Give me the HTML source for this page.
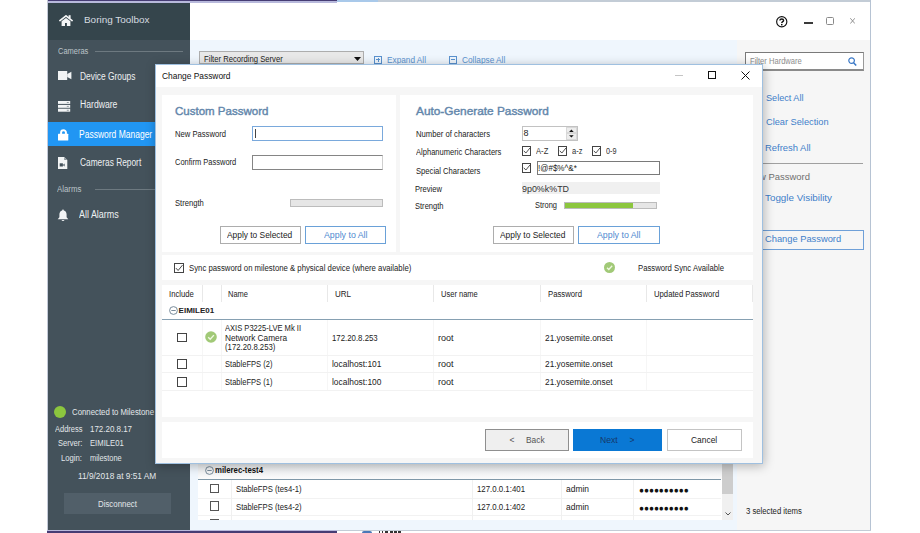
<!DOCTYPE html>
<html><head><meta charset="utf-8"><style>
html,body{margin:0;padding:0;}
body{width:920px;height:533px;overflow:hidden;position:relative;background:#fff;font-family:"Liberation Sans",sans-serif;}
div,span,svg{position:absolute;}
.t{white-space:nowrap;transform-origin:0 50%;}
</style></head><body>
<div style="left:47px;top:0px;width:290px;height:1px;background:#463c74"></div>
<div style="left:47px;top:1px;width:290px;height:2px;background:#b8b9dc"></div>
<div style="left:337px;top:0px;width:41px;height:2px;background:#a9c9ea"></div>
<div style="left:378px;top:0px;width:493px;height:2px;background:#c3ccd6"></div>
<div style="left:47px;top:0px;width:1px;height:533px;background:#c4cad8"></div>
<div style="left:870px;top:0px;width:1px;height:531px;background:#b6c3d3"></div>
<div style="left:47px;top:530px;width:290px;height:1px;background:#b8b9dc"></div>
<div style="left:47px;top:531px;width:290px;height:2px;background:#463c74"></div>
<div style="left:337px;top:530px;width:534px;height:1px;background:#c3ccd6"></div>
<div style="left:362px;top:531.3px;width:9.6px;height:1.7px;background:#4a78b8;border-radius:2px 2px 0 0"></div>
<div style="left:378.5px;top:531.4px;width:1.2px;height:1.6px;background:#333"></div>
<div style="left:381.5px;top:531.4px;width:1.2px;height:1.6px;background:#333"></div>
<div style="left:385px;top:531.4px;width:3.2px;height:1.6px;background:#333"></div>
<div style="left:389.5px;top:531.4px;width:3.2px;height:1.6px;background:#333"></div>
<div style="left:393.5px;top:531.4px;width:3.2px;height:1.6px;background:#333"></div>
<div style="left:397.5px;top:531.4px;width:3.2px;height:1.6px;background:#333"></div>
<div style="left:48px;top:3px;width:142px;height:37px;background:#35454c"></div>
<div style="left:48px;top:40px;width:142px;height:490px;background:#44525b"></div>
<div style="left:48px;top:122px;width:142px;height:24px;background:#2196f3"></div>
<svg style="position:absolute;left:58.5px;top:15px" width="14" height="11" viewBox="0 0 14 11"><path d="M0.9 5.6 L7 0.9 L13.1 5.6" stroke="#f4f5f6" stroke-width="1.7" fill="none" stroke-linecap="round"/><rect x="9.6" y="0.2" width="2" height="3.2" fill="#f4f5f6"/><path d="M2.6 6.3 L7 2.9 L11.4 6.3 V11 H7.9 V8 H6 V11 H2.6Z" fill="#f4f5f6"/></svg>
<span class="t" style="left:84px;top:16.29px;font-size:9px;line-height:9px;color:#d5dce0;transform:scaleX(1.1032);">Boring Toolbox</span>
<span class="t" style="left:57.7px;top:47.44px;font-size:8.5px;line-height:8.5px;color:#bcc4c9;transform:scaleX(0.8788);">Cameras</span>
<div style="left:95px;top:51px;width:88px;height:1px;background:#6d7980"></div>
<svg style="position:absolute;left:57.8px;top:71px" width="14" height="9" viewBox="0 0 14 9"><rect x="0" y="0" width="9.2" height="9" fill="#f2f4f5"/><path d="M9.2 3 L13.4 0.8 V8.3 L9.2 6Z" fill="#f2f4f5"/></svg>
<span class="t" style="left:79.6px;top:71.70px;font-size:10px;line-height:10px;color:#eef0f2;transform:scaleX(0.8377);">Device Groups</span>
<svg style="position:absolute;left:57.8px;top:100.6px" width="13" height="11" viewBox="0 0 13 11"><rect x="0" y="0" width="12.2" height="2.9" fill="#f2f4f5"/><rect x="0" y="3.9" width="12.2" height="2.9" fill="#f2f4f5"/><rect x="0" y="7.7" width="12.2" height="3" fill="#f2f4f5"/><rect x="8.8" y="1" width="2" height="0.9" fill="#8a949a"/><rect x="8.8" y="4.9" width="2" height="0.9" fill="#8a949a"/><rect x="8.8" y="8.8" width="2" height="0.9" fill="#8a949a"/></svg>
<span class="t" style="left:79.6px;top:100.40px;font-size:10px;line-height:10px;color:#eef0f2;transform:scaleX(0.8628);">Hardware</span>
<svg style="position:absolute;left:57.8px;top:129px" width="11" height="12" viewBox="0 0 11 12"><path d="M3.1 5 V3.6 A2.4 2.4 0 0 1 7.9 3.6 V5" stroke="#fff" stroke-width="2" fill="none"/><rect x="0" y="4.7" width="10.3" height="6.9" rx="0.6" fill="#fff"/></svg>
<span class="t" style="left:79.3px;top:129.50px;font-size:10px;line-height:10px;color:#ffffff;transform:scaleX(0.8497);">Password Manager</span>
<svg style="position:absolute;left:57.8px;top:157px" width="10" height="12" viewBox="0 0 10 12"><path d="M0 0 H6.2 L9.3 3.1 V12 H0Z" fill="#f2f4f5"/><path d="M6.2 0 V3.1 H9.3Z" fill="#8a949a"/><rect x="1.7" y="6.3" width="3.2" height="3.2" fill="#44525b"/><path d="M4.9 7.9 L6.6 6.4 V9.4Z" fill="#44525b"/></svg>
<span class="t" style="left:79.5px;top:157.90px;font-size:10px;line-height:10px;color:#eef0f2;transform:scaleX(0.8343);">Cameras Report</span>
<span class="t" style="left:57.4px;top:184.94px;font-size:8.5px;line-height:8.5px;color:#bcc4c9;transform:scaleX(0.9226);">Alarms</span>
<div style="left:95px;top:189px;width:60px;height:1px;background:#6d7980"></div>
<svg style="position:absolute;left:57px;top:208.7px" width="12" height="13" viewBox="0 0 12 13"><path d="M6 0.5 C6.6 0.5 6.8 1 6.8 1.5 C8.8 2 9.6 3.6 9.6 5.6 V8.3 L11.3 10.3 H0.7 L2.4 8.3 V5.6 C2.4 3.6 3.2 2 5.2 1.5 C5.2 1 5.4 0.5 6 0.5Z" fill="#f2f4f5"/><path d="M4.5 11 A1.6 1.6 0 0 0 7.5 11Z" fill="#f2f4f5"/></svg>
<span class="t" style="left:79.2px;top:209.70px;font-size:10px;line-height:10px;color:#eef0f2;transform:scaleX(0.8931);">All Alarms</span>
<div style="left:54px;top:406px;width:12px;height:12px;background:#8cc63e;border-radius:50%"></div>
<span class="t" style="left:71.8px;top:408.23px;font-size:8.5px;line-height:8.5px;color:#e3e7ea;transform:scaleX(0.9183);">Connected to Milestone</span>
<span class="t" style="left:54.6px;top:424.53px;font-size:8.5px;line-height:8.5px;color:#e3e7ea;transform:scaleX(0.8788);">Address</span>
<span class="t" style="left:89.8px;top:424.53px;font-size:8.5px;line-height:8.5px;color:#e3e7ea;transform:scaleX(0.9354);">172.20.8.17</span>
<span class="t" style="left:57.6px;top:438.83px;font-size:8.5px;line-height:8.5px;color:#e3e7ea;transform:scaleX(0.8907);">Server:</span>
<span class="t" style="left:89.8px;top:438.83px;font-size:8.5px;line-height:8.5px;color:#e3e7ea;transform:scaleX(0.9029);">EIMILE01</span>
<span class="t" style="left:61px;top:453.53px;font-size:8.5px;line-height:8.5px;color:#e3e7ea;transform:scaleX(0.9068);">Login:</span>
<span class="t" style="left:89.8px;top:453.53px;font-size:8.5px;line-height:8.5px;color:#e3e7ea;transform:scaleX(0.8687);">milestone</span>
<span class="t" style="left:78.2px;top:471.63px;font-size:8.5px;line-height:8.5px;color:#e3e7ea;transform:scaleX(0.9754);">11/9/2018 at 9:51 AM</span>
<div style="left:64px;top:493px;width:107px;height:21px;background:#515f69"></div>
<span class="t" style="left:98.1px;top:499.63px;font-size:8.5px;line-height:8.5px;color:#e3e7ea;transform:scaleX(0.9252);">Disconnect</span>
<div style="left:190px;top:3px;width:680px;height:37px;background:#ffffff"></div>
<div style="left:190px;top:40px;width:547px;height:490px;background:#eff6fd"></div>
<div style="left:737px;top:40px;width:133px;height:490px;background:#f6f6f6"></div>
<svg style="position:absolute;left:775.8px;top:15.5px" width="12" height="12" viewBox="0 0 12 12"><circle cx="5.75" cy="5.75" r="5.1" stroke="#111" stroke-width="1.15" fill="none"/><path d="M3.9 4.4 C3.9 2.6 7.6 2.6 7.6 4.4 C7.6 5.6 5.75 5.6 5.75 7" stroke="#111" stroke-width="1.4" fill="none"/><rect x="5" y="7.9" width="1.5" height="1.5" fill="#111"/></svg>
<div style="left:804.1px;top:21.7px;width:8.7px;height:2px;background:#3a3a3a"></div>
<div style="left:826px;top:17.2px;width:7.7px;height:7.6px;border:1px solid #8a8a8a;box-sizing:border-box;border-radius:1.5px"></div>
<svg style="position:absolute;left:850.2px;top:18.2px" width="5.2" height="5.8" viewBox="0 0 5.2 5.8"><path d="M0.3 0.2 L4.9 5.6 M4.9 0.2 L0.3 5.6" stroke="#888" stroke-width="0.9"/></svg>
<div style="left:198.5px;top:51px;width:165px;height:13px;background:#e8e8e8;border:1px solid #adadad;box-sizing:border-box"></div>
<span class="t" style="left:203.5px;top:55.09px;font-size:9px;line-height:9px;color:#222;transform:scaleX(0.8506);">Filter Recording Server</span>
<svg style="position:absolute;left:354px;top:57px" width="7" height="4" viewBox="0 0 7 4"><path d="M0 0 H7 L3.5 4Z" fill="#111"/></svg>
<div style="left:374px;top:55.5px;width:8px;height:8px;border:1px solid #5a92cf;box-sizing:border-box"></div>
<div style="left:376px;top:59px;width:4px;height:1px;background:#5a92cf"></div>
<div style="left:377.5px;top:57.5px;width:1px;height:4px;background:#5a92cf"></div>
<span class="t" style="left:386.5px;top:56.19px;font-size:9px;line-height:9px;color:#5a92cf;transform:scaleX(0.9170);">Expand All</span>
<div style="left:449px;top:55.5px;width:8px;height:8px;border:1px solid #5a92cf;box-sizing:border-box"></div>
<div style="left:451px;top:59px;width:4px;height:1px;background:#5a92cf"></div>
<span class="t" style="left:461.7px;top:56.19px;font-size:9px;line-height:9px;color:#5a92cf;transform:scaleX(0.9208);">Collapse All</span>
<div style="left:744.5px;top:52px;width:119px;height:19px;background:#fff;border:1px solid #7a7a7a;border-right-color:#999;border-bottom:2px solid #8a8a8a;box-sizing:border-box"></div>
<span class="t" style="left:750px;top:56.59px;font-size:9px;line-height:9px;color:#8d8d8d;transform:scaleX(0.8421);">Filter Hardware</span>
<svg style="position:absolute;left:848.2px;top:56.5px" width="9" height="9" viewBox="0 0 9 9"><circle cx="3.6" cy="3.6" r="2.8" stroke="#3a78c6" stroke-width="1.2" fill="none"/><path d="M5.6 5.7 L8.2 8.4" stroke="#3a78c6" stroke-width="1.5"/></svg>
<span class="t" style="left:765.5px;top:92.84px;font-size:9.5px;line-height:9.5px;color:#3f7fca;transform:scaleX(0.9597);">Select All</span>
<span class="t" style="left:765.7px;top:117.34px;font-size:9.5px;line-height:9.5px;color:#3f7fca;transform:scaleX(0.9702);">Clear Selection</span>
<span class="t" style="left:765.4px;top:142.75px;font-size:9.5px;line-height:9.5px;color:#3f7fca;transform:scaleX(0.9927);">Refresh All</span>
<div style="left:740px;top:163px;width:123px;height:1px;background:#a0a0a0"></div>
<span class="t" style="left:747px;top:172.04px;font-size:9.5px;line-height:9.5px;color:#707070;transform:scaleX(0.9944);">New Password</span>
<span class="t" style="left:765.4px;top:192.75px;font-size:9.5px;line-height:9.5px;color:#3f7fca;transform:scaleX(1.0344);">Toggle Visibility</span>
<div style="left:740px;top:229.5px;width:123.5px;height:20px;border:1px solid #6fa0d8;box-sizing:border-box"></div>
<span class="t" style="left:765.4px;top:234.44px;font-size:9.5px;line-height:9.5px;color:#3f7fca;transform:scaleX(0.9804);">Change Password</span>
<div style="left:722px;top:440px;width:11px;height:79.5px;background:#f0f0f0"></div>
<div style="left:722px;top:440px;width:11px;height:54px;background:#cdcdcd"></div>
<svg style="position:absolute;left:725px;top:512.2px" width="6" height="4" viewBox="0 0 6 4"><path d="M0.5 0.5 L3 3 L5.5 0.5" stroke="#555" stroke-width="1" fill="none"/></svg>
<span class="t" style="left:746.4px;top:507.03px;font-size:8.5px;line-height:8.5px;color:#222;transform:scaleX(0.9086);">3 selected items</span>
<div style="left:198px;top:463px;width:524px;height:57px;background:#ffffff"></div>
<div style="left:198px;top:463px;width:524px;height:16px;background:linear-gradient(#e9ecef,#fbfbfb)"></div>
<div style="left:198px;top:479px;width:523px;height:1px;background:#7f98a8"></div>
<div style="left:198px;top:497.5px;width:523px;height:1px;background:#f2f2f2"></div>
<div style="left:198px;top:514.5px;width:523px;height:1px;background:#f2f2f2"></div>
<div style="left:231px;top:480px;width:1px;height:40px;background:#f0f0f0"></div>
<div style="left:471.5px;top:480px;width:1px;height:40px;background:#f0f0f0"></div>
<div style="left:560.5px;top:480px;width:1px;height:40px;background:#f0f0f0"></div>
<div style="left:633.3px;top:480px;width:1px;height:40px;background:#f0f0f0"></div>
<svg style="position:absolute;left:204.5px;top:466px" width="9" height="9" viewBox="0 0 9 9"><circle cx="4.5" cy="4.5" r="3.9" stroke="#6a7f90" stroke-width="0.9" fill="none"/><path d="M2.3 4.5 H6.7" stroke="#6a7f90" stroke-width="0.9"/></svg>
<span class="t" style="left:215.2px;top:466.33px;font-size:8.5px;line-height:8.5px;color:#111;font-weight:bold;transform:scaleX(0.9153);">milerec-test4</span>
<div style="left:209.5px;top:483.5px;width:9.5px;height:9.5px;border:1px solid #555;box-sizing:border-box;background:#fff"></div>
<span class="t" style="left:236.4px;top:484.83px;font-size:8.5px;line-height:8.5px;color:#222;transform:scaleX(0.9076);">StableFPS (tes4-1)</span>
<span class="t" style="left:476.8px;top:484.83px;font-size:8.5px;line-height:8.5px;color:#222;transform:scaleX(0.9233);">127.0.0.1:401</span>
<span class="t" style="left:565.5px;top:484.83px;font-size:8.5px;line-height:8.5px;color:#222;transform:scaleX(0.9936);">admin</span>
<span class="t" style="left:638.8px;top:485.94px;font-size:8.5px;line-height:8.5px;color:#111;transform:scaleX(0.9660);">●●●●●●●●●●</span>
<div style="left:209.5px;top:501.2px;width:9.5px;height:9.5px;border:1px solid #555;box-sizing:border-box;background:#fff"></div>
<span class="t" style="left:236.4px;top:502.53px;font-size:8.5px;line-height:8.5px;color:#222;transform:scaleX(0.9076);">StableFPS (tes4-2)</span>
<span class="t" style="left:476.8px;top:502.53px;font-size:8.5px;line-height:8.5px;color:#222;transform:scaleX(0.9233);">127.0.0.1:402</span>
<span class="t" style="left:565.5px;top:502.53px;font-size:8.5px;line-height:8.5px;color:#222;transform:scaleX(0.9936);">admin</span>
<span class="t" style="left:638.8px;top:503.63px;font-size:8.5px;line-height:8.5px;color:#111;transform:scaleX(0.9660);">●●●●●●●●●●</span>
<div style="left:209.5px;top:519px;width:9.5px;height:1px;background:#555"></div>
<div style="left:154.5px;top:63.5px;width:608.3px;height:400px;background:#f6f6f6;border:1px solid #9fc0e0;box-sizing:border-box;box-shadow:1px 2px 10px rgba(0,0,0,0.28)"></div>
<div style="left:155.5px;top:64.5px;width:606.3px;height:22px;background:#ffffff"></div>
<span class="t" style="left:162.2px;top:71.14px;font-size:9.5px;line-height:9.5px;color:#111;transform:scaleX(0.8825);">Change Password</span>
<div style="left:675px;top:75px;width:7.5px;height:1px;background:#c5c5c5"></div>
<div style="left:708.2px;top:71.3px;width:7.4px;height:7.8px;border:1px solid #111;box-sizing:border-box"></div>
<svg style="position:absolute;left:741px;top:71px" width="9" height="9" viewBox="0 0 9 9"><path d="M0.5 0.5 L8.5 8.5 M8.5 0.5 L0.5 8.5" stroke="#111" stroke-width="1"/></svg>
<div style="left:161.8px;top:95px;width:234.5px;height:156.5px;background:#fff"></div>
<div style="left:400px;top:95px;width:352.8px;height:156.5px;background:#fff"></div>
<span class="t" style="left:175px;top:106.11px;font-size:11.2px;line-height:11.2px;color:#6286ab;transform:scaleX(1.0289);-webkit-text-stroke:0.4px #6286ab;">Custom Password</span>
<span class="t" style="left:175px;top:128.94px;font-size:9.5px;line-height:9.5px;color:#222;transform:scaleX(0.8050);">New Password</span>
<div style="left:252px;top:126.2px;width:131px;height:14.6px;border:1px solid #7aa9dc;box-sizing:border-box;background:#fff"></div>
<div style="left:254.5px;top:128.8px;width:1px;height:9.5px;background:#444"></div>
<span class="t" style="left:174.5px;top:158.29px;font-size:9px;line-height:9px;color:#222;transform:scaleX(0.8325);">Confirm Password</span>
<div style="left:252px;top:155px;width:131px;height:15px;border:1px solid #858585;border-right-color:#cfcfcf;box-sizing:border-box;background:#fff"></div>
<span class="t" style="left:174.6px;top:198.79px;font-size:9px;line-height:9px;color:#222;transform:scaleX(0.8466);">Strength</span>
<div style="left:290px;top:198.5px;width:93.3px;height:8.2px;border:1px solid #bcbcbc;box-sizing:border-box;background:#e6e6e6"></div>
<div style="left:220.2px;top:226.3px;width:80.7px;height:17.6px;border:1px solid #adadad;box-sizing:border-box;background:#fff"></div>
<span class="t" style="left:227px;top:230.79px;font-size:9px;line-height:9px;color:#222;transform:scaleX(0.9309);">Apply to Selected</span>
<div style="left:305.3px;top:226.3px;width:80.7px;height:17.6px;border:1px solid #6aa1d8;box-sizing:border-box;background:#fff"></div>
<span class="t" style="left:323.5px;top:230.79px;font-size:9px;line-height:9px;color:#4f8ad0;transform:scaleX(0.9770);">Apply to All</span>
<span class="t" style="left:415.5px;top:106.11px;font-size:11.2px;line-height:11.2px;color:#6286ab;transform:scaleX(1.0577);-webkit-text-stroke:0.4px #6286ab;">Auto-Generate Password</span>
<span class="t" style="left:415.6px;top:130.19px;font-size:9px;line-height:9px;color:#222;transform:scaleX(0.8552);">Number of characters</span>
<div style="left:521.8px;top:126.4px;width:56.2px;height:14.4px;border:1px solid #c2c2c2;box-sizing:border-box;background:#fff"></div>
<span class="t" style="left:523.5px;top:129.49px;font-size:9px;line-height:9px;color:#222;">8</span>
<div style="left:566.3px;top:127.4px;width:10.8px;height:6.1px;background:#ededed;border:1px solid #d8d8d8;box-sizing:border-box"></div>
<div style="left:566.3px;top:133.3px;width:10.8px;height:6.3px;background:#ededed;border:1px solid #d8d8d8;box-sizing:border-box"></div>
<svg style="position:absolute;left:566.3px;top:127.4px" width="11" height="12" viewBox="0 0 11 12"><path d="M3.1 4.9 L5.4 2.5 L7.7 4.9Z M3.1 8.2 L5.4 10.6 L7.7 8.2Z" fill="#111"/></svg>
<span class="t" style="left:415.6px;top:147.79px;font-size:9px;line-height:9px;color:#222;transform:scaleX(0.8411);">Alphanumeric Characters</span>
<div style="left:521.8px;top:146.4px;width:9.4px;height:9.4px;border:1px solid #444;box-sizing:border-box;background:#fff"></div>
<svg style="position:absolute;left:521.8px;top:146.4px" width="9.4" height="9.4" viewBox="0 0 10 10"><path d="M1.9 5.1 L4.1 7.5 L8.5 2.1" stroke="#333" stroke-width="0.9" fill="none"/></svg>
<span class="t" style="left:535.7px;top:147.09px;font-size:9px;line-height:9px;color:#333;transform:scaleX(0.8484);">A-Z</span>
<div style="left:558px;top:146.4px;width:9.4px;height:9.4px;border:1px solid #444;box-sizing:border-box;background:#fff"></div>
<svg style="position:absolute;left:558px;top:146.4px" width="9.4" height="9.4" viewBox="0 0 10 10"><path d="M1.9 5.1 L4.1 7.5 L8.5 2.1" stroke="#333" stroke-width="0.9" fill="none"/></svg>
<span class="t" style="left:571.7px;top:147.09px;font-size:9px;line-height:9px;color:#333;transform:scaleX(0.8399);">a-z</span>
<div style="left:592px;top:146.4px;width:9.4px;height:9.4px;border:1px solid #444;box-sizing:border-box;background:#fff"></div>
<svg style="position:absolute;left:592px;top:146.4px" width="9.4" height="9.4" viewBox="0 0 10 10"><path d="M1.9 5.1 L4.1 7.5 L8.5 2.1" stroke="#333" stroke-width="0.9" fill="none"/></svg>
<span class="t" style="left:605.8px;top:147.09px;font-size:9px;line-height:9px;color:#333;transform:scaleX(0.8073);">0-9</span>
<span class="t" style="left:415.6px;top:166.59px;font-size:9px;line-height:9px;color:#222;transform:scaleX(0.8470);">Special Characters</span>
<div style="left:521.8px;top:163.2px;width:9.4px;height:9.4px;border:1px solid #444;box-sizing:border-box;background:#fff"></div>
<svg style="position:absolute;left:521.8px;top:163.2px" width="9.4" height="9.4" viewBox="0 0 10 10"><path d="M1.9 5.1 L4.1 7.5 L8.5 2.1" stroke="#333" stroke-width="0.9" fill="none"/></svg>
<div style="left:537px;top:161.2px;width:122.8px;height:14.2px;border:1px solid #7a7a7a;box-sizing:border-box;background:#fff"></div>
<span class="t" style="left:537.9px;top:163.94px;font-size:8.5px;line-height:8.5px;color:#222;transform:scaleX(0.9471);">!@#$%^&amp;*</span>
<span class="t" style="left:415.3px;top:184.99px;font-size:9px;line-height:9px;color:#222;transform:scaleX(0.8435);">Preview</span>
<div style="left:521.8px;top:181.8px;width:138px;height:12.6px;background:#f0f0f0"></div>
<span class="t" style="left:522px;top:183.54px;font-size:9.5px;line-height:9.5px;color:#333;transform:scaleX(0.9371);">9p0%k%TD</span>
<span class="t" style="left:414.5px;top:201.89px;font-size:9px;line-height:9px;color:#222;transform:scaleX(0.8377);">Strength</span>
<span class="t" style="left:535.3px;top:201.39px;font-size:9px;line-height:9px;color:#222;transform:scaleX(0.8297);">Strong</span>
<div style="left:563.7px;top:201.6px;width:93px;height:7.9px;border:1px solid #bcbcbc;box-sizing:border-box;background:#e6e6e6"></div>
<div style="left:564.7px;top:202.6px;width:68.6px;height:5.9px;background:#8cc63e"></div>
<div style="left:493.3px;top:226.4px;width:80.4px;height:17.6px;border:1px solid #adadad;box-sizing:border-box;background:#fff"></div>
<span class="t" style="left:500px;top:230.79px;font-size:9px;line-height:9px;color:#222;transform:scaleX(0.9323);">Apply to Selected</span>
<div style="left:578.3px;top:226.4px;width:81.5px;height:17.6px;border:1px solid #6aa1d8;box-sizing:border-box;background:#fff"></div>
<span class="t" style="left:597px;top:230.79px;font-size:9px;line-height:9px;color:#4f8ad0;transform:scaleX(0.9770);">Apply to All</span>
<div style="left:161.8px;top:255px;width:590.8px;height:24.8px;background:#fff"></div>
<div style="left:173.9px;top:262.8px;width:10px;height:10px;border:1px solid #444;box-sizing:border-box;background:#fff"></div>
<svg style="position:absolute;left:173.9px;top:262.8px" width="10" height="10" viewBox="0 0 10 10"><path d="M1.9 5.1 L4.1 7.5 L8.5 2.1" stroke="#333" stroke-width="0.9" fill="none"/></svg>
<span class="t" style="left:188.5px;top:263.73px;font-size:8.5px;line-height:8.5px;color:#222;transform:scaleX(0.9137);">Sync password on milestone &amp; physical device (where available)</span>
<svg style="position:absolute;left:603.5px;top:262px" width="11" height="11" viewBox="0 0 11 11"><circle cx="5.5" cy="5.5" r="5.5" fill="#a1c977"/><path d="M3 5.7 L4.8 7.5 L8.2 3.8" stroke="#f0f8e2" stroke-width="1.3" fill="none"/></svg>
<span class="t" style="left:637.9px;top:263.63px;font-size:8.5px;line-height:8.5px;color:#222;transform:scaleX(0.9081);">Password Sync Available</span>
<div style="left:161.8px;top:284.8px;width:590.8px;height:132.2px;background:#fff"></div>
<div style="left:202.3px;top:285px;width:1px;height:17px;background:#e8e8e8"></div>
<div style="left:220.5px;top:285px;width:1px;height:17px;background:#e8e8e8"></div>
<div style="left:327px;top:285px;width:1px;height:17px;background:#e8e8e8"></div>
<div style="left:433.4px;top:285px;width:1px;height:17px;background:#e8e8e8"></div>
<div style="left:539.5px;top:285px;width:1px;height:17px;background:#e8e8e8"></div>
<div style="left:645.7px;top:285px;width:1px;height:17px;background:#e8e8e8"></div>
<div style="left:752px;top:285px;width:1px;height:17px;background:#e8e8e8"></div>
<div style="left:202.3px;top:320px;width:1px;height:70px;background:#f6f6f6"></div>
<div style="left:220.5px;top:320px;width:1px;height:70px;background:#f6f6f6"></div>
<div style="left:327px;top:320px;width:1px;height:70px;background:#f6f6f6"></div>
<div style="left:433.4px;top:320px;width:1px;height:70px;background:#f6f6f6"></div>
<div style="left:539.5px;top:320px;width:1px;height:70px;background:#f6f6f6"></div>
<div style="left:645.7px;top:320px;width:1px;height:70px;background:#f6f6f6"></div>
<span class="t" style="left:169.4px;top:290.03px;font-size:8.5px;line-height:8.5px;color:#222;transform:scaleX(0.9049);">Include</span>
<span class="t" style="left:228px;top:290.03px;font-size:8.5px;line-height:8.5px;color:#222;transform:scaleX(0.8821);">Name</span>
<span class="t" style="left:334.6px;top:290.03px;font-size:8.5px;line-height:8.5px;color:#222;transform:scaleX(0.9410);">URL</span>
<span class="t" style="left:441px;top:290.03px;font-size:8.5px;line-height:8.5px;color:#222;transform:scaleX(0.8853);">User name</span>
<span class="t" style="left:547.7px;top:290.03px;font-size:8.5px;line-height:8.5px;color:#222;transform:scaleX(0.9111);">Password</span>
<span class="t" style="left:653.8px;top:290.03px;font-size:8.5px;line-height:8.5px;color:#222;transform:scaleX(0.9079);">Updated Password</span>
<svg style="position:absolute;left:168.5px;top:306px" width="9" height="9" viewBox="0 0 9 9"><circle cx="4.5" cy="4.5" r="3.9" stroke="#6a7f90" stroke-width="0.9" fill="none"/><path d="M2.3 4.5 H6.7" stroke="#6a7f90" stroke-width="0.9"/></svg>
<span class="t" style="left:178.6px;top:307.28px;font-size:8px;line-height:8px;color:#222;font-weight:bold;">EIMILE01</span>
<div style="left:161.8px;top:319px;width:590.8px;height:1px;background:#86a0b2"></div>
<div style="left:161.8px;top:355px;width:590.8px;height:1px;background:#f2f2f2"></div>
<div style="left:161.8px;top:372.2px;width:590.8px;height:1px;background:#f2f2f2"></div>
<div style="left:161.8px;top:389.8px;width:590.8px;height:1px;background:#f2f2f2"></div>
<div style="left:177px;top:332.7px;width:10px;height:9.5px;border:1px solid #444;box-sizing:border-box;background:#fff"></div>
<svg style="position:absolute;left:205px;top:331.3px" width="12" height="12" viewBox="0 0 12 12"><circle cx="6" cy="6" r="5.8" fill="#a1c977"/><path d="M3.2 6.2 L5.2 8.2 L8.9 4.1" stroke="#f0f8e2" stroke-width="1.4" fill="none"/></svg>
<span class="t" style="left:225.1px;top:324.03px;font-size:8.5px;line-height:8.5px;color:#222;transform:scaleX(0.8904);">AXIS P3225-LVE Mk II</span>
<span class="t" style="left:225.1px;top:333.94px;font-size:8.5px;line-height:8.5px;color:#222;transform:scaleX(0.9723);">Network Camera</span>
<span class="t" style="left:225.1px;top:343.44px;font-size:8.5px;line-height:8.5px;color:#222;transform:scaleX(0.9098);">(172.20.8.253)</span>
<span class="t" style="left:332px;top:333.63px;font-size:8.5px;line-height:8.5px;color:#222;transform:scaleX(0.9209);">172.20.8.253</span>
<span class="t" style="left:438px;top:333.63px;font-size:8.5px;line-height:8.5px;color:#222;transform:scaleX(1.0652);">root</span>
<span class="t" style="left:544.6px;top:333.63px;font-size:8.5px;line-height:8.5px;color:#222;transform:scaleX(0.9800);">21.yosemite.onset</span>
<div style="left:177px;top:359.3px;width:10px;height:9.5px;border:1px solid #444;box-sizing:border-box;background:#fff"></div>
<span class="t" style="left:225.1px;top:360.13px;font-size:8.5px;line-height:8.5px;color:#222;transform:scaleX(0.8880);">StableFPS (2)</span>
<span class="t" style="left:332px;top:360.13px;font-size:8.5px;line-height:8.5px;color:#222;transform:scaleX(0.9863);">localhost:101</span>
<span class="t" style="left:438px;top:360.13px;font-size:8.5px;line-height:8.5px;color:#222;transform:scaleX(1.0652);">root</span>
<span class="t" style="left:544.6px;top:360.13px;font-size:8.5px;line-height:8.5px;color:#222;transform:scaleX(0.9800);">21.yosemite.onset</span>
<div style="left:177px;top:377.2px;width:10px;height:9.5px;border:1px solid #444;box-sizing:border-box;background:#fff"></div>
<span class="t" style="left:225.1px;top:378.03px;font-size:8.5px;line-height:8.5px;color:#222;transform:scaleX(0.8880);">StableFPS (1)</span>
<span class="t" style="left:332px;top:378.03px;font-size:8.5px;line-height:8.5px;color:#222;transform:scaleX(0.9863);">localhost:100</span>
<span class="t" style="left:438px;top:378.03px;font-size:8.5px;line-height:8.5px;color:#222;transform:scaleX(1.0652);">root</span>
<span class="t" style="left:544.6px;top:378.03px;font-size:8.5px;line-height:8.5px;color:#222;transform:scaleX(0.9800);">21.yosemite.onset</span>
<div style="left:161.5px;top:421.6px;width:591.3px;height:36.6px;background:#fff"></div>
<div style="left:485.4px;top:429px;width:83.2px;height:21.8px;border:1px solid #8f8f8f;box-sizing:border-box;background:#efefef"></div>
<span class="t" style="left:509.5px;top:436.44px;font-size:8.5px;line-height:8.5px;color:#555;">&lt;</span>
<span class="t" style="left:526px;top:435.99px;font-size:9px;line-height:9px;color:#555;transform:scaleX(0.9296);">Back</span>
<div style="left:573.4px;top:429px;width:88.3px;height:21.8px;background:#0a78d4"></div>
<span class="t" style="left:600px;top:435.99px;font-size:9px;line-height:9px;color:#15396a;transform:scaleX(0.9565);">Next</span>
<span class="t" style="left:629.6px;top:436.44px;font-size:8.5px;line-height:8.5px;color:#15396a;">&gt;</span>
<div style="left:667.2px;top:429px;width:75.1px;height:21.8px;border:1px solid #c4c4c4;box-sizing:border-box;background:#fff"></div>
<span class="t" style="left:691.3px;top:435.99px;font-size:9px;line-height:9px;color:#222;transform:scaleX(0.9352);">Cancel</span>
</body></html>
